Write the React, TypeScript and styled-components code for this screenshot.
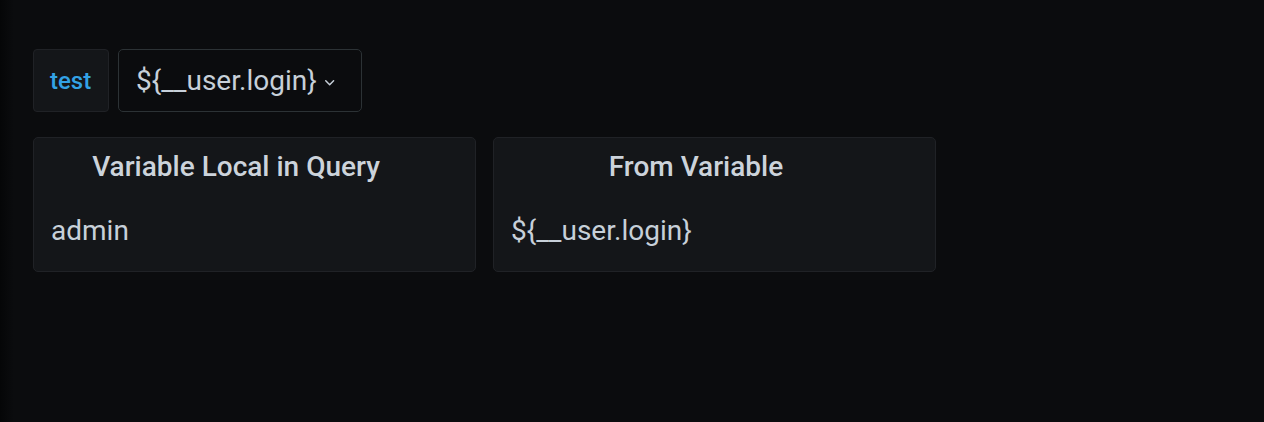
import React from "react";
import styled, { createGlobalStyle } from "styled-components";

const GlobalStyle = createGlobalStyle`
  html, body {
    margin: 0;
    padding: 0;
    background: #0b0c0e;
  }
  body {
    font-family: Roboto, "Liberation Sans", sans-serif;
    color: #c7d0d9;
  }
`;

interface PanelProps {
  title: string;
  value: string;
}

const Panel = ({ title, value }: PanelProps) => (
  <PanelBox>
    <PanelHeader>
      <PanelTitle>{title}</PanelTitle>
    </PanelHeader>
    <PanelBody>{value}</PanelBody>
  </PanelBox>
);

const Chevron = () => (
  <svg width="13" height="9" viewBox="0 0 13 9" fill="none">
    <path
      d="M2 2.5 L6.5 7 L11 2.5"
      stroke="#c7d0d9"
      strokeWidth="1.7"
      strokeLinecap="round"
      strokeLinejoin="round"
    />
  </svg>
);

export default function App() {
  return (
    <>
      <GlobalStyle />
      <Page>
        <Toolbar>
          <VarLabel>test</VarLabel>
          <Picker>
            <span>{"${__user.login}"}</span>
            <Chevron />
          </Picker>
        </Toolbar>
        <PanelRow>
          <Panel title="Variable Local in Query" value="admin" />
          <Panel title="From Variable" value="${__user.login}" />
        </PanelRow>
      </Page>
    </>
  );
}

const Page = styled.div`
  width: 1264px;
  height: 422px;
  box-sizing: border-box;
  padding: 49px 0 0 33px;
  background: linear-gradient(to right, #050607 0, #0b0c0e 14px);
`;

const Toolbar = styled.div`
  display: flex;
  align-items: stretch;
  gap: 9px;
  height: 63px;
`;

const VarLabel = styled.div`
  display: flex;
  align-items: center;
  padding: 0 16px;
  background: #141619;
  border: 1px solid #202226;
  border-radius: 4px;
  color: #33a2e5;
  font-size: 24px;
  font-weight: 500;
  box-sizing: border-box;
  width: 76px;
`;

const Picker = styled.div`
  display: flex;
  align-items: center;
  gap: 7px;
  padding: 0 26px 0 17px;
  width: 244px;
  box-sizing: border-box;
  background: #0b0c0e;
  border: 1px solid #2c3235;
  border-radius: 5px;
  font-size: 28px;
  color: #c7d0d9;
  svg {
    margin-top: 3px;
  }
`;

const PanelRow = styled.div`
  display: flex;
  gap: 17px;
  margin-top: 25px;
`;

const PanelBox = styled.div`
  width: 443px;
  height: 135px;
  box-sizing: border-box;
  background: #141619;
  border: 1px solid #202226;
  border-radius: 5px;
  display: flex;
  flex-direction: column;
`;

const PanelHeader = styled.div`
  height: 57px;
  display: flex;
  align-items: center;
  justify-content: center;
  padding-right: 37px;
`;

const PanelTitle = styled.div`
  font-size: 28px;
  font-weight: 500;
  color: #ccd3db;
`;

const PanelBody = styled.div`
  padding: 19px 17px 0;
  font-size: 28px;
  color: #c7d0d9;
`;
